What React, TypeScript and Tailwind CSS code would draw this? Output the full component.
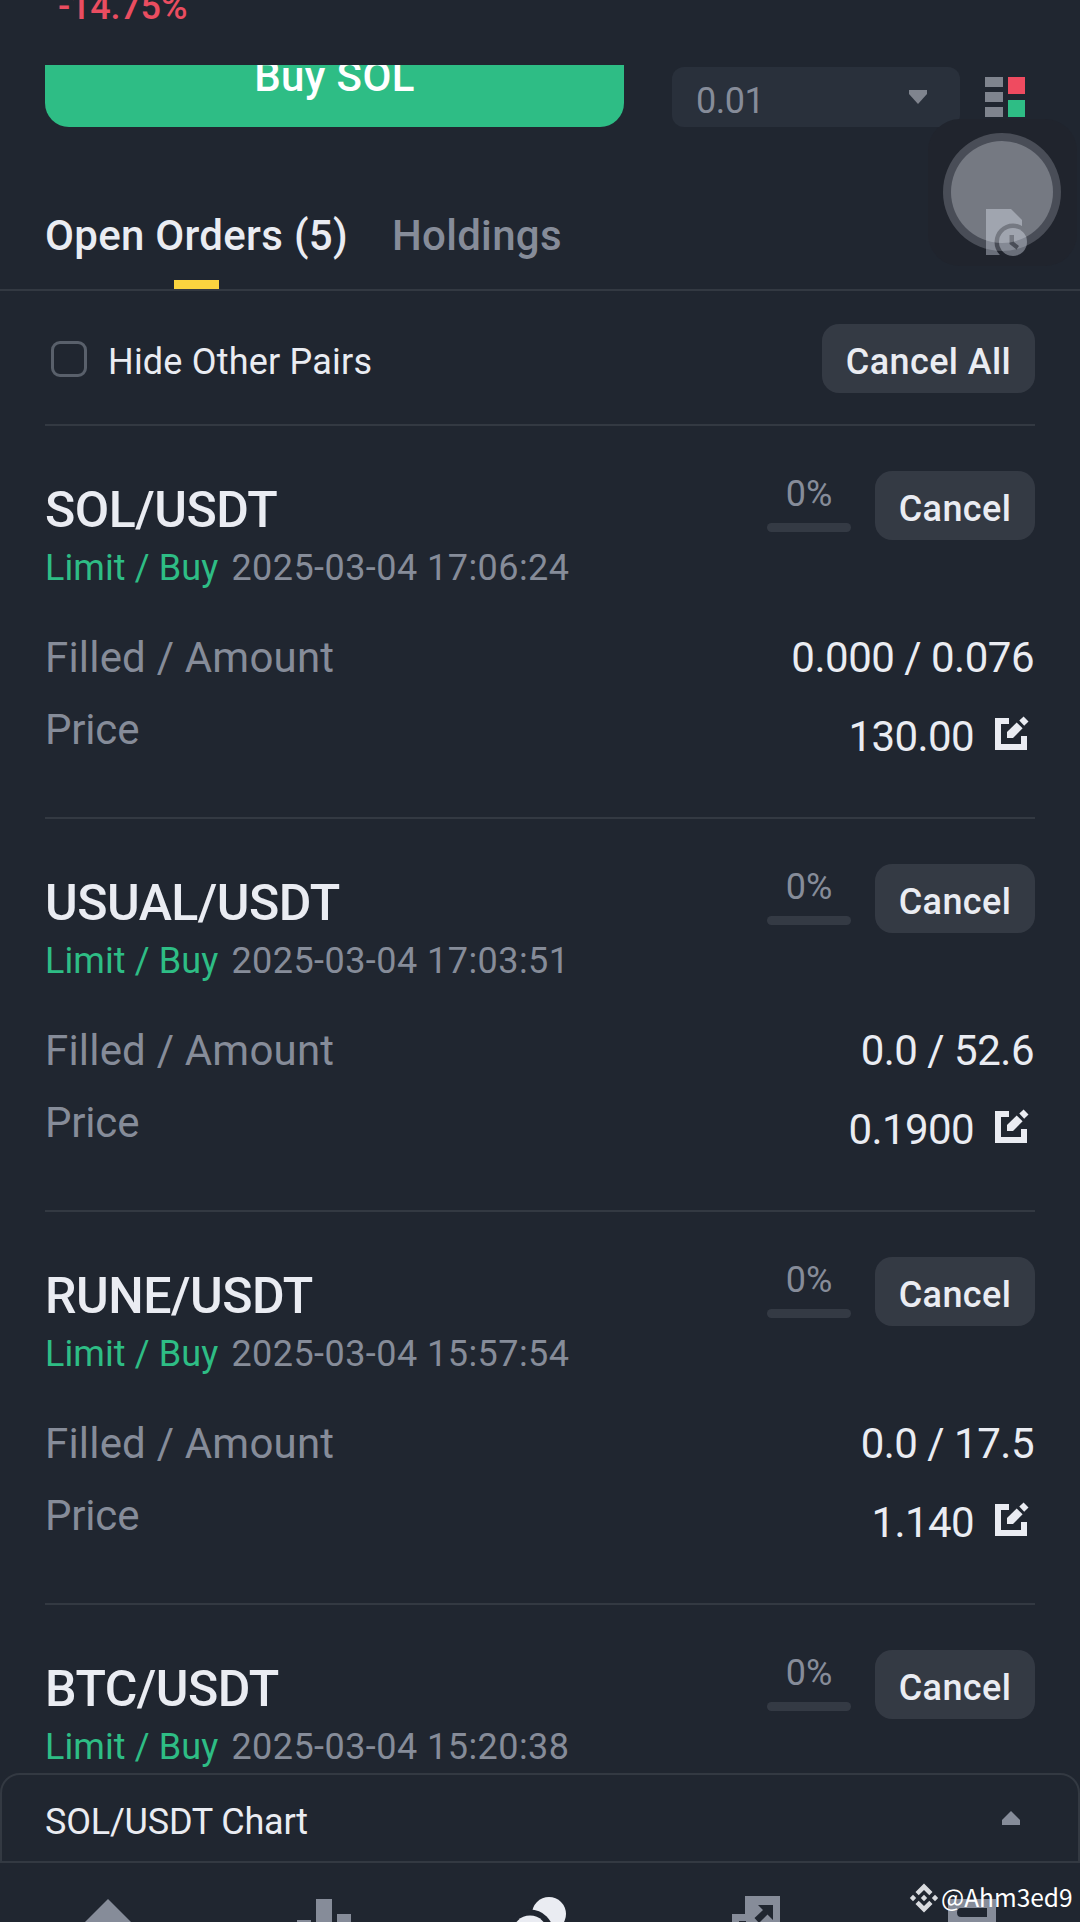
import { clsx } from "clsx";

type Order = {
  pair: string;
  time: string;
  amount: string;
  price: string;
};

const orders: Order[] = [
  { pair: "SOL/USDT", time: "2025-03-04 17:06:24", amount: "0.000 / 0.076", price: "130.00" },
  { pair: "USUAL/USDT", time: "2025-03-04 17:03:51", amount: "0.0 / 52.6", price: "0.1900" },
  { pair: "RUNE/USDT", time: "2025-03-04 15:57:54", amount: "0.0 / 17.5", price: "1.140" },
];

const nextOrder = { pair: "BTC/USDT", time: "2025-03-04 15:20:38" };

const EditIcon = () => (
  <svg width="34" height="36" viewBox="0 -3 34 36" fill="#eaecf2" className="-mt-px">
    <path d="M0 0H14V6H6V26H26V18H32V32H0Z" />
    <path d="M12 14L21.7 4.6L27.6 10.2L18 20H12Z" />
    <path d="M24.3 2.6L28.6 -1.5L33.5 3.6L29.2 7.8Z" />
  </svg>
);

const BookIcon = () => (
  <svg width="41" height="41" viewBox="0 0 41 41">
    <g fill="#7f848e">
      <rect width="18" height="10" />
      <rect y="15" width="18" height="10" />
      <rect y="30" width="18" height="10" />
    </g>
    <rect x="23" width="17" height="17" fill="#ef4b60" />
    <rect x="23" y="23" width="17" height="17" fill="#2ebd85" />
  </svg>
);

const HistoryIcon = () => (
  <svg width="42" height="48" viewBox="0 0 42 48">
    <path d="M0 0H25L36 11V46H0Z" fill="#6a6f7a" />
    <circle cx="27" cy="33" r="18.5" fill="#20242d" />
    <circle cx="27" cy="33" r="14" fill="#6a6f7a" />
    <path d="M23.5 26H28V33L33 37L30.5 40.5L23.5 35Z" fill="#20242d" />
  </svg>
);

const CancelButton = ({ label, className }: { label: string; className: string }) => (
  <button
    className={clsx(
      "flex h-[69px] shrink-0 items-center justify-center rounded-[17px] bg-[#343a44] pt-[7px] text-[36px] leading-[36px] font-medium tracking-[0.4px] whitespace-nowrap",
      className
    )}
  >
    {label}
  </button>
);

const OrderHeader = ({ pair, time }: { pair: string; time: string }) => (
  <div className="flex h-[160px] justify-between">
    <div className="pt-[59px]">
      <h3 className="text-[50px] leading-[50px] font-medium tracking-[-0.5px]">{pair}</h3>
      <p className="mt-[15px] flex gap-[13px] text-[36px] leading-[36px] whitespace-nowrap">
        <span className="tracking-[0.1px] text-[#2ebd85]">Limit / Buy</span>
        <span className="tracking-[0.45px] text-[#868c99]">{time}</span>
      </p>
    </div>
    <div className="flex gap-6 pt-[45px]">
      <div className="flex w-[84px] flex-col items-center pt-[5px]">
        <span className="text-[36px] leading-[36px] text-[#868c99]">0%</span>
        <div className="mt-[11px] h-[9px] w-full rounded-full bg-[#343a44]" />
      </div>
      <CancelButton label="Cancel" className="w-[160px]" />
    </div>
  </div>
);

const OrderCard = ({ order }: { order: Order }) => (
  <div className="mx-[45px] h-[393px] shrink-0 border-b-2 border-[#333942]">
    <OrderHeader pair={order.pair} time={order.time} />
    <div className="mt-[51px] flex justify-between text-[42px] leading-[42px]">
      <div className="text-[#868c99]">
        <p className="tracking-[0.2px]">Filled / Amount</p>
        <p className="mt-[30px] tracking-[-0.2px]">Price</p>
      </div>
      <div className="flex flex-col items-end">
        <p className="pr-px tracking-[-0.5px]">{order.amount}</p>
        <p className="mt-[37px] flex items-start pr-[6px]">
          <span className="mr-[21px] tracking-[-0.6px]">{order.price}</span>
          <EditIcon />
        </p>
      </div>
    </div>
  </div>
);

const TabBar = () => (
  <nav className="h-[59px] shrink-0 overflow-hidden">
    <svg width="1080" height="59" viewBox="0 1863 1080 59" fill="#868c99">
      <path d="M108 1899L84 1923H132Z" />
      <path d="M297 1920H311V1922H297ZM316 1899H332V1922H316ZM337 1914H351V1922H337Z" />
      <g fill="#eaecf2">
        <circle cx="549" cy="1914" r="17" />
        <circle cx="530" cy="1933" r="23.5" fill="#202630" />
        <circle cx="530" cy="1933" r="17.5" />
      </g>
      <path d="M745 1896H780V1922H732V1914H745Z" />
      <path d="M758 1905H773V1920L767.5 1914.500L759 1923L754.5 1918L763 1910Z" fill="#202630" />
      <path d="M739 1921H746V1922H739Z" fill="#202630" />
      <path d="M948 1899H996V1922H948Z" />
      <path d="M961 1908H987V1917H961Q957 1917 957 1912.500Q957 1908 961 1908Z" fill="#202630" />
    </svg>
  </nav>
);

const Watermark = () => (
  <div className="absolute top-[1883px] left-[909px] flex items-start gap-[2px] text-white">
    <svg width="30" height="30" viewBox="-15 -15 30 30" fill="#d9dbdf">
      <path d="M0 -14.500L8.500 -6L5.300 -2.800L0 -8.100L-5.300 -2.800L-8.500 -6Z" />
      <path d="M0 14.500L8.500 6L5.300 2.800L0 8.100L-5.300 2.800L-8.500 6Z" />
      <path d="M0 -3.200L3.200 0L0 3.200L-3.200 0Z" />
      <path d="M-11 -3.200L-7.800 0L-11 3.200L-14.200 0Z" />
      <path d="M11 -3.200L14.200 0L11 3.200L7.800 0Z" />
    </svg>
    <span className="-mt-px font-['Noto_Sans_CJK_SC',sans-serif] text-[24.5px] leading-[30px]">@Ahm3ed9</span>
  </div>
);

export default function App() {
  return (
    <div className="relative flex h-[1922px] w-[1080px] flex-col overflow-hidden bg-[#202630] font-[Roboto,sans-serif] text-[#eaecf2]">
      <div className="h-[65px] shrink-0 overflow-hidden pl-[58px]">
        <p className="-mt-[11px] text-[36px] leading-[36px] font-medium tracking-[-0.2px] text-[#ea4d60]">
          -14.75%
        </p>
      </div>

      {/* Order form footer */}
      <div className="flex h-[62px] shrink-0 pl-[45px]">
        <button className="flex h-[62px] w-[579px] items-start justify-center overflow-hidden rounded-b-[24px] bg-[#2ebd85] text-white">
          <span className="-mt-[9px] text-[42px] leading-[42px] font-medium tracking-[0.4px]">Buy SOL</span>
        </button>
        <div className="mt-[2px] ml-12 flex h-[60px] w-[288px] items-center justify-between rounded-xl bg-[#29303b] pr-[33px] pl-6">
          <span className="pt-[7px] text-[36px] leading-[36px] tracking-[-0.5px] text-[#868c99]">0.01</span>
          <svg width="18" height="14" viewBox="0 0 18 14" fill="#7f848e">
            <path d="M0 0H18V4L9 14L0 4Z" />
          </svg>
        </div>
        <div className="mt-3 ml-[25px]">
          <BookIcon />
        </div>
      </div>

      {/* Tabs */}
      <div className="flex h-[164px] shrink-0 justify-between border-b-2 border-[#333942] pl-[45px]">
        <div className="flex gap-[44px] text-[42px] leading-[42px] font-medium">
          <div className="flex flex-col items-center">
            <span className="mt-[88px] tracking-[0.3px]">Open Orders (5)</span>
            <span className="mt-[23px] h-[9px] w-[45px] bg-[#fad43f]" />
          </div>
          <span className="mt-[88px] tracking-[0.3px] text-[#868c99]">Holdings</span>
        </div>
        <div className="relative z-10 mt-[82px] mr-[52px]">
          <HistoryIcon />
        </div>
      </div>

      {/* Filter row */}
      <div className="mx-[45px] flex h-[135px] shrink-0 items-start border-b-2 border-[#333942] pt-[33px]">
        <span className="mt-[17px] ml-[6px] h-9 w-9 rounded-[9px] border-3 border-[#59606b]" />
        <span className="mt-5 ml-[21px] text-[36px] leading-[36px] tracking-[0.2px]">Hide Other Pairs</span>
        <CancelButton label="Cancel All" className="ml-auto w-[213px]" />
      </div>

      <div className="flex min-h-0 flex-1 flex-col overflow-hidden">
        {orders.map((order) => (
          <OrderCard key={order.pair} order={order} />
        ))}
        <div className="mx-[45px] shrink-0">
          <OrderHeader pair={nextOrder.pair} time={nextOrder.time} />
        </div>
      </div>

      <div className="flex h-[90px] shrink-0 items-center justify-between rounded-t-[20px] border-2 border-[#333942] pr-[58px] pl-[43px]">
        <span className="pt-2 text-[36px] leading-[36px] tracking-[-0.2px]">SOL/USDT Chart</span>
        <svg width="18" height="14" viewBox="0 0 18 14" fill="#868c99">
          <path d="M0 14H18V9L9 0L0 9Z" />
        </svg>
      </div>
      <TabBar />

      {/* Floating assistive button */}
      <div className="absolute top-[119px] left-[928px] h-[147px] w-[149px] rounded-[32px] bg-[#20242d]" />
      <div className="absolute top-[133px] left-[943px] z-20 flex h-[118px] w-[118px] items-center justify-center rounded-full bg-[#f0f4ff]/20">
        <div className="h-[102px] w-[102px] rounded-full bg-[#f4f7ff]/26" />
      </div>
      <Watermark />
    </div>
  );
}
